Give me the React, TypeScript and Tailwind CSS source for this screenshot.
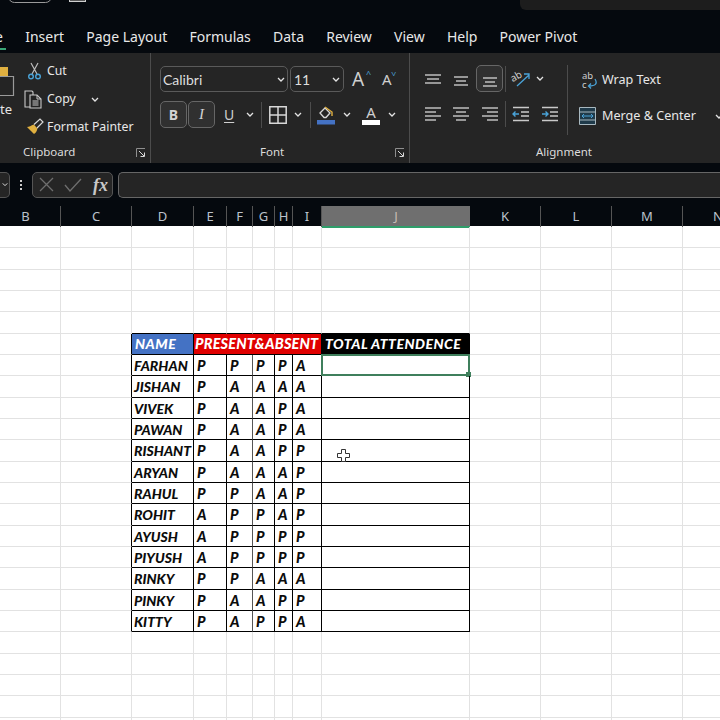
import React from 'react';

const uiFont = 'font-["Noto_Sans","Open_Sans",sans-serif]';

const tabs = ['Insert', 'Page Layout', 'Formulas', 'Data', 'Review', 'View', 'Help', 'Power Pivot'];
const columns = ['B', 'C', 'D', 'E', 'F', 'G', 'H', 'I', 'J', 'K', 'L', 'M', 'N'];

const students: [string, string][] = [
  ['FARHAN', 'PPPPA'],
  ['JISHAN', 'PAAAA'],
  ['VIVEK', 'PAAPA'],
  ['PAWAN', 'PAAPA'],
  ['RISHANT', 'PAAPP'],
  ['ARYAN', 'PAAAP'],
  ['RAHUL', 'PPAAP'],
  ['ROHIT', 'APPAP'],
  ['AYUSH', 'APPPP'],
  ['PIYUSH', 'APPPP'],
  ['RINKY', 'PPAAA'],
  ['PINKY', 'PAAPP'],
  ['KITTY', 'PAPPA'],
];

function Chevron({ className = '' }: { className?: string }) {
  return (
    <svg width="8" height="5" viewBox="0 0 8 5" className={className}>
      <path d="M1 1l3 3 3-3" fill="none" stroke="#e4e4e4" strokeWidth="1.3" />
    </svg>
  );
}

function Launcher({ className = '' }: { className?: string }) {
  return (
    <svg width="10" height="10" viewBox="0 0 10 10" className={className}>
      <path d="M.5 9V.5H9" fill="none" stroke="#8f8f8f" />
      <path d="M3 3l5 5M4.500 8.500h4v-4" fill="none" stroke="#d8d8d8" />
    </svg>
  );
}

function Lines({ rows, color = '#c9c9c9' }: { rows: [number, number, number][]; color?: string }) {
  return (
    <svg width="18" height="18" viewBox="0 0 18 18">
      {rows.map(([x1, x2, y], i) => (
        <path key={i} d={`M${x1} ${y}H${x2}`} stroke={color} strokeWidth="1.4" />
      ))}
    </svg>
  );
}

function Indent({ flip }: { flip?: boolean }) {
  return (
    <svg width="18" height="18" viewBox="0 0 18 18">
      <path d="M1 2.500h16M9 7h8M9 11h8M1 15.500h16" stroke="#c9c9c9" strokeWidth="1.3" />
      {flip ? (
        <path d="M1 9h6M3.500 6.500L1 9l2.500 2.500" fill="none" stroke="#4aa3d8" strokeWidth="1.4" />
      ) : (
        <path d="M1 9h6M4.500 6.500L7 9l-2.500 2.500" fill="none" stroke="#4aa3d8" strokeWidth="1.4" />
      )}
    </svg>
  );
}

function ClipboardGroup() {
  return (
    <div className="flex flex-col w-[151px] h-full border-r border-[#4c4c4c] shrink-0">
      <div className="flex flex-1">
        <div className="w-[24px] flex flex-col pt-[12px] text-[#e6e6e6] text-[13px] leading-none">
          <svg width="15" height="31" viewBox="0 0 15 31">
            <path d="M0 2h8v9H0z" fill="#e0b040" />
            <path d="M0 11.500h13.500V30.500H0" fill="#242424" stroke="#9a9a9a" strokeWidth="1.2" />
          </svg>
          <span className="mt-[7px]">te</span>
        </div>
        <div className="flex flex-col pt-[8px] text-[12.3px] text-[#e8e8e8]">
          <div className="flex items-center h-[20px] ml-[2px] gap-[3px] mb-[8px]">
            <svg width="18" height="18" viewBox="0 0 18 18">
              <path d="M5 1l6 11M12 1L6 12" stroke="#bdbdbd" strokeWidth="1.2" fill="none" />
              <circle cx="5" cy="14.500" r="2.300" fill="none" stroke="#4aa3d8" strokeWidth="1.4" />
              <circle cx="12" cy="14.500" r="2.300" fill="none" stroke="#4aa3d8" strokeWidth="1.4" />
            </svg>
            <span>Cut</span>
          </div>
          <div className="flex items-center h-[20px] gap-[4px] mb-[8px]">
            <svg width="19" height="19" viewBox="0 0 19 19">
              <path d="M6 17H1V1h7l1 1v3" fill="none" stroke="#c9c9c9" strokeWidth="1.1" />
              <path d="M6 5h7l4 4v9H6z" fill="#242424" stroke="#c9c9c9" strokeWidth="1.1" />
              <path d="M13 5v4h4M8.500 11h6M8.500 13h6M8.500 15h6" fill="none" stroke="#c9c9c9" />
            </svg>
            <span>Copy</span>
            <Chevron className="ml-[11px]" />
          </div>
          <div className="flex items-center h-[20px] gap-[3px] pl-[2px]">
            <svg width="18" height="18" viewBox="0 0 18 18">
              <path d="M1 9l7 7c2-1 3-3 3.500-6L8 6.500C5 7.500 3 9 1 9z" fill="#e0b040" />
              <path d="M8 6.500L14 1l3 3-6 6" fill="#242424" stroke="#d8d8d8" strokeWidth="1.2" />
            </svg>
            <span>Format Painter</span>
          </div>
        </div>
      </div>
      <div className="relative h-[20px] text-[11.5px] leading-[18px] text-[#dcdcdc]">
        <span className="ml-[23px]">Clipboard</span>
        <Launcher className="absolute right-[4px] top-[5px]" />
      </div>
    </div>
  );
}

function FontGroup() {
  return (
    <div className="flex flex-col w-[259px] h-full border-r border-[#4c4c4c] shrink-0 pl-[9px]">
      <div className="flex-1 pt-[13px]">
        <div className="flex items-center h-[26px]">
          <div className="flex items-center justify-between w-[128px] h-[26px] rounded-[5px] border border-[#5a5a5a] px-[2px] text-[14px] text-[#dedede] font-['Lato',sans-serif]">
            <span>Calibri</span>
            <Chevron />
          </div>
          <div className="flex items-center justify-between w-[54px] h-[26px] ml-[2px] rounded-[5px] border border-[#5a5a5a] px-[3px] text-[14px] text-[#dedede] font-['Lato',sans-serif]">
            <span>11</span>
            <Chevron />
          </div>
          <span className="relative ml-[8px] w-[24px] text-[19px] leading-none text-[#cfcfcf]">
            A<span className="absolute left-[14px] -top-[1px] text-[9px] text-[#4aa3d8]">^</span>
          </span>
          <span className="relative ml-[6px] w-[20px] text-[15px] leading-none text-[#cfcfcf]">
            A<span className="absolute left-[9px] -top-[3px] text-[9px] text-[#4aa3d8] rotate-180">^</span>
          </span>
        </div>
        <div className="flex items-center h-[27px] mt-[9px]">
          <div className="flex items-center justify-center w-[27px] h-[27px] rounded-[5px] border border-[#666] bg-[#303030] text-[14px] font-bold text-[#d4d4d4]">
            B
          </div>
          <div className="flex items-center justify-center w-[27px] h-[27px] ml-[1px] rounded-[5px] border border-[#666] bg-[#303030] font-['Liberation_Serif',serif] text-[15px] italic text-[#d4d4d4]">
            I
          </div>
          <span className="ml-[9px] w-[12px] text-[14px] leading-none underline underline-offset-2 text-[#cfcfcf]">U</span>
          <Chevron className="ml-[10px]" />
          <div className="w-px h-[26px] bg-[#4c4c4c] ml-[7px]" />
          <svg width="18" height="18" viewBox="0 0 18 18" className="ml-[7px]">
            <path d="M.8.800h16.400v16.400H.800zM9 1v16M1 9h16" fill="none" stroke="#d8d8d8" strokeWidth="1.5" />
          </svg>
          <Chevron className="ml-[7px]" />
          <div className="w-px h-[26px] bg-[#4c4c4c] ml-[8px]" />
          <svg width="18" height="20" viewBox="0 0 18 20" className="ml-[6px]">
            <path d="M3 8l5-5 5 5-4 4.500H7z" fill="none" stroke="#d8d8d8" strokeWidth="1.3" />
            <path d="M8 2l7 5v4" fill="none" stroke="#e0b040" strokeWidth="1.4" />
            <path d="M0 15h18v4.500H0z" fill="#4472c4" />
          </svg>
          <Chevron className="ml-[8px]" />
          <div className="relative flex flex-col items-center ml-[11px] w-[18px] h-[20px] text-[15px] leading-[15px] text-[#cfcfcf]">
            A
            <div className="absolute bottom-0 inset-x-0 h-[5px] bg-white" />
          </div>
          <Chevron className="ml-[8px]" />
        </div>
      </div>
      <div className="relative h-[20px] text-[11.5px] leading-[18px] text-[#dcdcdc]">
        <span className="absolute left-[100px] top-0">Font</span>
        <Launcher className="absolute right-[4px] top-[5px]" />
      </div>
    </div>
  );
}

function AlignmentGroup() {
  return (
    <div className="relative flex h-full shrink-0 w-[330px] pl-[14px] text-[12.6px] text-[#e8e8e8]">
      <div className="flex flex-col w-[144px] h-[70px] mt-[12px] border-r border-[#4c4c4c] shrink-0">
        <div className="flex items-center h-[27px]">
          <Lines rows={[[1, 17, 5], [3, 15, 9], [1, 17, 13]]} />
          <span className="w-[10px]" />
          <Lines rows={[[2, 16, 7], [4, 14, 11], [2, 16, 15]]} />
          <span className="w-[6px]" />
          <div className="flex items-center justify-center w-[27px] h-[27px] rounded-[5px] border border-[#666] bg-[#303030]">
            <Lines rows={[[2, 16, 8], [4, 14, 12], [2, 16, 16]]} />
          </div>
          <div className="w-px h-[26px] bg-[#4c4c4c] ml-[2px]" />
          <svg width="20" height="18" viewBox="0 0 20 18" className="ml-[5px] overflow-visible">
            <text x="0" y="10" fontSize="10" fill="#cfcfcf" transform="rotate(-30 5 8)">ab</text>
            <path d="M6 16L18 5M13 4h5v5" fill="none" stroke="#4aa3d8" strokeWidth="1.3" />
          </svg>
          <Chevron className="ml-[5px]" />
        </div>
        <div className="flex items-center h-[27px] mt-[8px]">
          <Lines rows={[[1, 17, 3], [1, 12, 7], [1, 17, 11], [1, 12, 15]]} />
          <span className="w-[10px]" />
          <Lines rows={[[1, 17, 3], [4, 14, 7], [1, 17, 11], [4, 14, 15]]} />
          <span className="w-[11px]" />
          <Lines rows={[[1, 17, 3], [6, 17, 7], [1, 17, 11], [6, 17, 15]]} />
          <div className="w-px h-[26px] bg-[#4c4c4c] ml-[6px]" />
          <span className="w-[6px]" />
          <Indent flip />
          <span className="w-[11px]" />
          <Indent />
        </div>
      </div>
      <div className="flex flex-col pt-[16px] pl-[13px]">
        <div className="flex items-center h-[22px] gap-[4px]">
          <svg width="17" height="19" viewBox="0 0 17 19" className="overflow-visible">
            <text x="1" y="8" fontSize="9.500" fill="#cfcfcf">ab</text>
            <text x="1" y="17" fontSize="9.500" fill="#cfcfcf">c</text>
            <path d="M14 8c3 5 0 7-6 7M10 12.500L7.500 15l2.500 2.500" fill="none" stroke="#4aa3d8" strokeWidth="1.3" />
          </svg>
          <span>Wrap Text</span>
        </div>
        <div className="flex items-center h-[22px] mt-[14px] -ml-[2px] gap-[6px]">
          <svg width="17" height="18" viewBox="0 0 17 18">
            <path d="M.500.500h16v17H.500z" fill="#1f3a4a" stroke="#a8b8c0" />
            <path d="M1 5h15M1 13h15" stroke="#a8b8c0" />
            <path d="M3 9h11M5 7L3 9l2 2M12 7l2 2-2 2" fill="none" stroke="#4aa3d8" />
          </svg>
          <span>Merge &amp; Center</span>
          <Chevron className="ml-[13px]" />
        </div>
      </div>
      <span className="absolute left-[126px] bottom-[2px] text-[11.5px] leading-[18px] text-[#dcdcdc]">Alignment</span>
    </div>
  );
}

function Sheet() {
  const cell = 'h-[21.33px] border-r border-b';
  const blank = 'border-[#e2e2e2]';
  return (
    <div className="-ml-[9px] pt-px grid grid-cols-[70px_71px_62px_33px_26px_22px_18px_29px_148px_71px_71px_71px_71px] auto-rows-[21.33px] w-[740px]">
      {Array.from({ length: 5 }).flatMap((_, r) =>
        columns.map((c, i) => (
          <div
            key={`top-${r}-${c}`}
            className={`${cell} ${r === 4 && i >= 2 && i <= 8 ? 'border-b-black border-r-[#e2e2e2]' : blank}`}
          />
        )),
      )}

      <div className={`${cell} ${blank}`} />
      <div className={`${cell} border-b-[#e2e2e2] border-r-black`} />
      <div className={`${cell} border-black bg-[#4472c4] pl-[3px] font-['Lato',sans-serif] text-[14px] tracking-[0.5px] leading-[20px] font-black italic text-white`}>
        NAME
      </div>
      <div className={`${cell} col-span-5 border-b-black border-r-black bg-[#e00000] pl-[1px] font-['Lato',sans-serif] text-[14.5px] tracking-[0.15px] leading-[20px] font-black italic text-white whitespace-nowrap`}>
        PRESENT&amp;ABSENT
      </div>
      <div className={`${cell} border-black bg-black pl-[3px] font-['Lato',sans-serif] text-[14px] tracking-[0.5px] leading-[20px] font-black italic text-white whitespace-nowrap`}>
        TOTAL ATTENDENCE
      </div>
      {columns.slice(9).map((c) => (
        <div key={`head-${c}`} className={`${cell} ${blank}`} />
      ))}

      {students.map(([name, marks], r) => (
        <React.Fragment key={name}>
          <div className={`${cell} ${blank}`} />
          <div className={`${cell} border-b-[#e2e2e2] border-r-black`} />
          <div className={`${cell} border-black pl-[2px] font-['Lato',sans-serif] text-[14px] leading-[21px] font-black italic text-[#0c0c0c] whitespace-nowrap`}>
            {name}
          </div>
          {marks.split('').map((m, i) => (
            <div
              key={i}
              className={`${cell} border-b-black ${i === 1 ? 'border-r-[#555]' : 'border-r-black'} pl-[3px] font-['Lato',sans-serif] text-[14.5px] leading-[21px] font-black italic text-[#0c0c0c]`}
            >
              {m}
            </div>
          ))}
          <div className={`${cell} relative border-black`}>
            {r === 0 && (
              <div className="absolute -left-px -top-px -right-px -bottom-px border-2 border-[#3f7f5c]">
                <div className="absolute -right-[3px] -bottom-[3px] w-[5px] h-[5px] bg-[#3f7f5c]" />
              </div>
            )}
            {r === 4 && (
              <svg width="13" height="13" viewBox="0 0 13 13" className="absolute z-10 left-[15px] top-[9px]">
                <path d="M4.500.500h4v4h4v4h-4v4h-4v-4h-4v-4h4z" fill="#fff" stroke="#333" />
              </svg>
            )}
          </div>
          {columns.slice(9).map((c) => (
            <div key={`${name}-${c}`} className={`${cell} ${blank}`} />
          ))}
        </React.Fragment>
      ))}

      {Array.from({ length: 5 }).flatMap((_, r) =>
        columns.map((c) => <div key={`bottom-${r}-${c}`} className={`${cell} ${blank}`} />),
      )}
    </div>
  );
}

export default function App() {
  return (
    <div className={`w-[720px] h-[720px] overflow-hidden bg-white ${uiFont}`}>
      {/* title bar + tabs */}
      <div className="relative h-[53px] bg-[#05090e] text-[#e8e8e8] overflow-hidden">
        <div className="absolute left-[8px] -top-[10px] w-[44px] h-[13px] rounded-full border border-[#9a9a9a]" />
        <div className="absolute left-[69px] -top-[3px] w-[17px] h-[5px] border border-[#cfcfcf] bg-[#555]" />
        <div className="absolute right-0 top-0 w-[200px] h-[10px] rounded-bl-[6px] bg-[#1d1d1d]" />
        <div className="flex items-center h-[53px] pt-[21px] -ml-[18px] text-[14px] leading-none gap-[22.2px]">
          <span>me</span>
          {tabs.map((t) => (
            <span key={t}>{t}</span>
          ))}
        </div>
        <div className="absolute left-0 bottom-[3px] w-[6px] h-[2px] bg-[#3aa676]" />
      </div>

      {/* ribbon */}
      <div className="flex h-[110px] bg-[#252525] text-[#e8e8e8]">
        <ClipboardGroup />
        <FontGroup />
        <AlignmentGroup />
      </div>

      {/* formula bar */}
      <div className="flex items-center h-[43px] bg-[#05090e]">
        <div className="flex items-center justify-end w-[10px] h-[26px] rounded-r-[5px] border border-l-0 border-[#555] bg-[#252525] pr-[1px]">
          <Chevron className="w-[6px]" />
        </div>
        <div className="flex flex-col gap-[2px] ml-[10px] w-[3px]">
          <span className="w-[2px] h-[2px] bg-[#ccc]" />
          <span className="w-[2px] h-[2px] bg-[#ccc]" />
          <span className="w-[2px] h-[2px] bg-[#ccc]" />
        </div>
        <div className="flex items-center w-[81px] h-[26px] ml-[9px] rounded-[5px] border border-[#555] bg-[#252525] pl-[6px]">
          <svg width="15" height="15" viewBox="0 0 15 15">
            <path d="M1 1l13 13M14 1L1 14" stroke="#6e6e6e" strokeWidth="1.3" />
          </svg>
          <svg width="18" height="14" viewBox="0 0 18 14" className="ml-[10px]">
            <path d="M1 7l5 6L17 1" fill="none" stroke="#6e6e6e" strokeWidth="1.3" />
          </svg>
          <span className="ml-[11px] font-['Liberation_Serif',serif] text-[18px] leading-none italic font-semibold text-[#c8c8c8]">fx</span>
        </div>
        <div className="flex-1 h-[26px] ml-[5px] rounded-l-[5px] border border-r-0 border-[#666] bg-[#252525]" />
      </div>

      {/* column headers */}
      <div className="-ml-[9px] grid grid-cols-[70px_71px_62px_33px_26px_22px_18px_29px_148px_71px_71px_71px_71px] h-[20px] w-[740px] bg-[#05090e] text-[13px] leading-[20px] text-[#bcc2cc] text-center">
        {columns.map((c) =>
          c === 'J' ? (
            <div key={c} className="bg-[#6f6f6f] border-b-2 border-[#2f9e6a] text-[#c9bdb5]">{c}</div>
          ) : (
            <div key={c} className="border-r border-[#555]">{c}</div>
          ),
        )}
      </div>

      <Sheet />
    </div>
  );
}
